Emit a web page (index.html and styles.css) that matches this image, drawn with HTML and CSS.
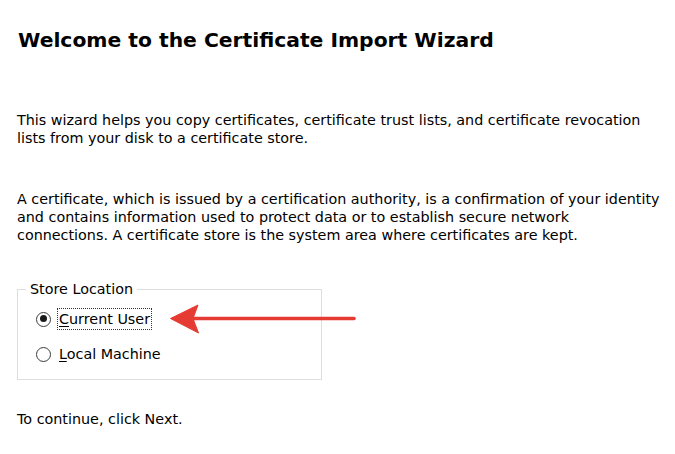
FILE: index.html
```html
<!DOCTYPE html>
<html>
<head>
<meta charset="utf-8">
<link rel="stylesheet" href="styles.css">
</head>
<body>
<div class="page">
  <h1 class="title">Welcome to the Certificate Import Wizard</h1>
  <p class="text intro">This wizard helps you copy certificates, certificate trust lists, and certificate revocation<br>lists from your disk to a certificate store.</p>
  <p class="text info">A certificate, which is issued by a certification authority, is a confirmation of your identity<br>and contains information used to protect data or to establish secure network<br>connections. A certificate store is the system area where certificates are kept.</p>
  <fieldset class="group">
    <legend class="group-label">Store Location</legend>
    <div class="radio-row first">
      <span class="radio checked"></span>
      <span class="radio-label focused"><u>C</u>urrent User</span>
    </div>
    <div class="radio-row second">
      <span class="radio"></span>
      <span class="radio-label"><u>L</u>ocal Machine</span>
    </div>
  </fieldset>
  <p class="text outro">To continue, click Next.</p>
</div>
<svg class="arrow" width="200" height="40" viewBox="0 0 200 40" xmlns="http://www.w3.org/2000/svg">
  <line x1="24" y1="16.5" x2="185" y2="16.5" stroke="#e53b33" stroke-width="3.6" stroke-linecap="round"/>
  <path d="M1.5 16.5 L29 3 L24 16.5 L29.5 31 Z" fill="#e53b33" stroke="#e53b33" stroke-width="1" stroke-linejoin="round"/>
</svg>
</body>
</html>
```
FILE: styles.css
```css
html, body {
  margin: 0;
  padding: 0;
  background: #ffffff;
}
body {
  position: relative;
  width: 675px;
  height: 454px;
  overflow: hidden;
  font-family: "DejaVu Sans", sans-serif;
  color: #000;
}
.page {
  padding: 0 0 0 17px;
}
.title {
  margin: 27px 0 0 1px;
  font-size: 20.3px;
  line-height: 26px;
  font-weight: 700;
  letter-spacing: 0;
}
.text {
  margin: 0;
  font-size: 14.34px;
  line-height: 18px;
  white-space: nowrap;
}
.intro {
  margin-top: 58px;
}
.info {
  margin-top: 43px;
}
.group {
  margin: 36px 0 0 0;
  padding: 0 0 14px 0;
  width: 305px;
  box-sizing: border-box;
  border: 1px solid #dedede;
  min-width: 0;
}
.group-label {
  margin-left: 8px;
  padding: 0 4px;
  font-size: 14.34px;
  line-height: 18px;
}
.radio-row {
  display: flex;
  align-items: center;
  height: 22px;
  font-size: 14.34px;
  line-height: 18px;
}
.radio-row.first {
  margin-top: 10px;
}
.radio-row.second {
  margin-top: 13px;
}
.radio {
  box-sizing: border-box;
  width: 15px;
  height: 15px;
  margin-left: 18px;
  border: 1.5px solid #3c3c3c;
  border-radius: 50%;
  background: #fff;
  position: relative;
  flex: none;
}
.radio.checked::after {
  content: "";
  position: absolute;
  left: 2.5px;
  top: 2.5px;
  width: 7px;
  height: 7px;
  border-radius: 50%;
  background: #1a1a1a;
}
.radio-label {
  margin-left: 6px;
  padding: 1px 1px;
  border: 1px solid transparent;
}
.radio-label.focused {
  border: 1px dotted #333;
}
.radio-label u {
  text-decoration-thickness: 1px;
  text-underline-offset: 2px;
}
.outro {
  margin-top: 30px;
}
.arrow {
  position: absolute;
  left: 169px;
  top: 302px;
}
```
